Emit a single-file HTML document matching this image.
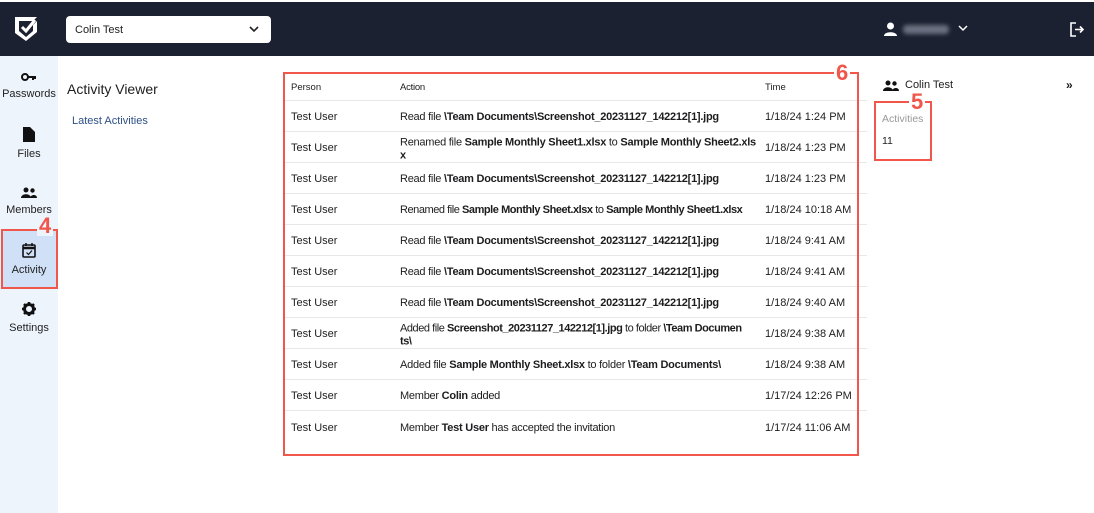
<!DOCTYPE html>
<html><head><style>
*{margin:0;padding:0;box-sizing:border-box}
body{width:1094px;height:513px;overflow:hidden;background:#fff;font-family:"Liberation Sans",sans-serif;color:#1d1d1f;position:relative}
.top{position:absolute;left:0;top:2px;width:1094px;height:54px;background:#1b2130}
.sel{position:absolute;left:66px;top:16px;width:205px;height:27px;background:#fff;border-radius:4px;font-size:11px;padding:8px 9px}
.side{position:absolute;left:0;top:56px;width:58px;height:457px;background:#eef4fc}
.nav{position:absolute;left:0;width:58px;text-align:center;font-size:11px;color:#222}
.nav svg{display:block;margin:0 auto 6px}
.red{position:absolute;border:2px solid #f0564a}
.num{position:absolute;color:#f0564a;font-weight:bold;font-size:22px;background:#fff;line-height:20px;padding:0 2px}
.row{position:absolute;left:285px;width:582px;border-bottom:1px solid #e8e8e8;font-size:11px;height:31px}
.row span{position:absolute;top:50%;transform:translateY(-40%);line-height:13px;white-space:nowrap}
.a{letter-spacing:-0.25px}
.p{left:6px}.a{left:115px}.t{left:480px}
</style></head><body>
<div class="top"></div>
<svg style="position:absolute;left:13px;top:15px" width="26" height="28" viewBox="0 0 26 28"><path d="M2 2h22l-4 4H6v10l7 6 7-6v-6l4-4v11l-11 9L2 18z" fill="#fff"/><path d="M9 12l4 4 9-11" stroke="#fff" stroke-width="3" fill="none"/></svg>
<div class="sel">Colin Test<svg style="position:absolute;right:12px;top:10px" width="10" height="7"><path d="M1 1l4 4 4-4" stroke="#222" stroke-width="1.6" fill="none"/></svg></div>
<svg style="position:absolute;left:884px;top:22px" width="13" height="14"><circle cx="6.5" cy="4" r="3.5" fill="#fff"/><path d="M0 14c0-5 13-5 13 0z" fill="#fff"/></svg>
<div style="position:absolute;left:903px;top:25px;width:46px;height:9px;background:#6b7180;border-radius:4px;filter:blur(2px)"></div>
<svg style="position:absolute;left:958px;top:25px" width="10" height="7"><path d="M1 1l4 4 4-4" stroke="#fff" stroke-width="1.5" fill="none"/></svg>
<svg style="position:absolute;left:1070px;top:22px" width="14" height="15"><path d="M6 1H1v13h5" stroke="#fff" stroke-width="1.6" fill="none"/><path d="M5 7.5h8M10 4.5l3 3-3 3" stroke="#fff" stroke-width="1.6" fill="none"/></svg>
<div class="side"></div>
<div class="nav" style="top:72px"><svg width="16" height="10"><circle cx="4" cy="5" r="3" stroke="#111" stroke-width="2" fill="none"/><path d="M7 5h8M12 5v3M14 5v2" stroke="#111" stroke-width="2"/></svg>Passwords</div>
<div class="nav" style="top:127px"><svg width="12" height="15"><path d="M0 0h7l5 5v10H0z" fill="#111"/></svg>Files</div>
<div class="nav" style="top:187px"><svg width="16" height="11"><circle cx="5" cy="3" r="2.5" fill="#111"/><circle cx="11.5" cy="3.5" r="2.2" fill="#111"/><path d="M0 11c0-5 10-5 10 0zM9 11c1-4 7-4 7 0z" fill="#111"/></svg>Members</div>
<div style="position:absolute;left:1px;top:229px;width:57px;height:60px;background:#cfe0f7;border:2px solid #f0564a"></div>
<div class="num" style="left:37px;top:216px;background:#eef4fc">4</div>
<div class="nav" style="top:243px"><svg width="14" height="15"><rect x="1" y="2" width="12" height="12" rx="1" stroke="#111" stroke-width="1.6" fill="none"/><path d="M1 5h12" stroke="#111" stroke-width="2.5"/><path d="M4 0v3M10 0v3" stroke="#111" stroke-width="1.5"/><path d="M4.5 9.5l2 2 3.5-4" stroke="#111" stroke-width="1.2" fill="none"/></svg>Activity</div>
<div class="nav" style="top:302px"><svg width="14" height="14" viewBox="0 0 14 14"><circle cx="7" cy="7" r="4.5" fill="none" stroke="#111" stroke-width="3"/><path d="M7 0v3M7 11v3M0 7h3M11 7h3M2 2l2 2M10 10l2 2M12 2l-2 2M2 12l2-2" stroke="#111" stroke-width="2.5"/></svg>Settings</div>
<div style="position:absolute;left:67px;top:81px;font-size:14px">Activity Viewer</div>
<div style="position:absolute;left:72px;top:115px;font-size:11px;color:#2d4f86">Latest Activities</div>
<div class="row" style="top:72px;height:29px;font-size:9.5px"><span class="p">Person</span><span class="a">Action</span><span class="t">Time</span></div>
<div class="row" style="top:101px"><span class="p">Test User</span><span class="a">Read file <b>\Team Documents\Screenshot_20231127_142212[1].jpg</b></span><span class="t">1/18/24 1:24 PM</span></div>
<div class="row" style="top:132px"><span class="p">Test User</span><span class="a">Renamed file <b>Sample Monthly Sheet1.xlsx</b> to <b>Sample Monthly Sheet2.xls</b><br><b>x</b></span><span class="t">1/18/24 1:23 PM</span></div>
<div class="row" style="top:163px"><span class="p">Test User</span><span class="a">Read file <b>\Team Documents\Screenshot_20231127_142212[1].jpg</b></span><span class="t">1/18/24 1:23 PM</span></div>
<div class="row" style="top:194px"><span class="p">Test User</span><span class="a" style="letter-spacing:-0.45px">Renamed file <b>Sample Monthly Sheet.xlsx</b> to <b>Sample Monthly Sheet1.xlsx</b></span><span class="t">1/18/24 10:18 AM</span></div>
<div class="row" style="top:225px"><span class="p">Test User</span><span class="a">Read file <b>\Team Documents\Screenshot_20231127_142212[1].jpg</b></span><span class="t">1/18/24 9:41 AM</span></div>
<div class="row" style="top:256px"><span class="p">Test User</span><span class="a">Read file <b>\Team Documents\Screenshot_20231127_142212[1].jpg</b></span><span class="t">1/18/24 9:41 AM</span></div>
<div class="row" style="top:287px"><span class="p">Test User</span><span class="a">Read file <b>\Team Documents\Screenshot_20231127_142212[1].jpg</b></span><span class="t">1/18/24 9:40 AM</span></div>
<div class="row" style="top:318px"><span class="p">Test User</span><span class="a" style="letter-spacing:-0.45px">Added file <b>Screenshot_20231127_142212[1].jpg</b> to folder <b>\Team Documen</b><br><b>ts\</b></span><span class="t">1/18/24 9:38 AM</span></div>
<div class="row" style="top:349px"><span class="p">Test User</span><span class="a">Added file <b>Sample Monthly Sheet.xlsx</b> to folder <b>\Team Documents\</b></span><span class="t">1/18/24 9:38 AM</span></div>
<div class="row" style="top:380px"><span class="p">Test User</span><span class="a">Member <b>Colin</b> added</span><span class="t">1/17/24 12:26 PM</span></div>
<div class="row" style="top:411px;border:none"><span class="p">Test User</span><span class="a">Member <b>Test User</b> has accepted the invitation</span><span class="t">1/17/24 11:06 AM</span></div>
<div class="red" style="left:283px;top:72px;width:576px;height:384px"></div>
<div class="num" style="left:834px;top:63px">6</div>
<svg style="position:absolute;left:883px;top:80px" width="16" height="11"><circle cx="5" cy="3" r="2.5" fill="#111"/><circle cx="11.5" cy="3.5" r="2.2" fill="#111"/><path d="M0 11c0-5 10-5 10 0zM9 11c1-4 7-4 7 0z" fill="#111"/></svg>
<div style="position:absolute;left:905px;top:79px;font-size:11px">Colin Test</div>
<div style="position:absolute;left:1066px;top:78px;font-size:12px;font-weight:bold">»</div>
<div class="red" style="left:874px;top:101px;width:58px;height:60px"></div>
<div class="num" style="left:909px;top:92px">5</div>
<div style="position:absolute;left:882px;top:113px;font-size:10.5px;color:#999">Activities</div>
<div style="position:absolute;left:882px;top:135px;font-size:10.5px">11</div>
</body></html>
